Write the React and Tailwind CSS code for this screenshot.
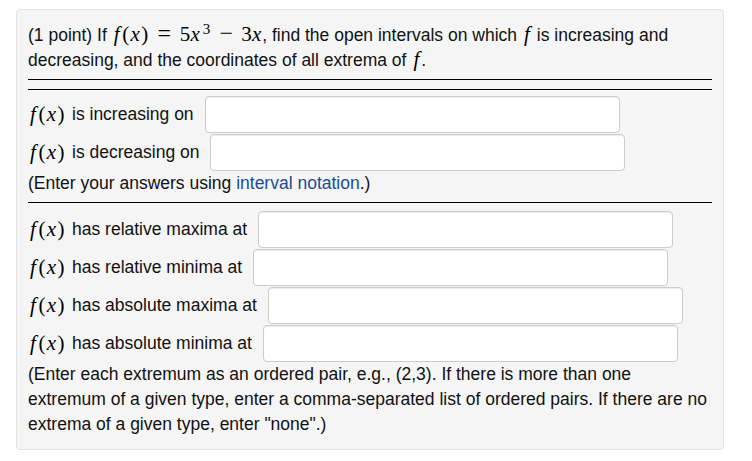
import React from "react";

const mathFont = { fontFamily: '"Liberation Serif", "Times New Roman", serif' };

function G({ w, it, children, cls = "" }) {
  const base = `inline-block text-center ${w} ${cls}`;
  return it ? <i className={base}>{children}</i> : <span className={base}>{children}</span>;
}

function M({ children }) {
  return (
    <span className="whitespace-nowrap text-[21px] leading-[0] text-black" style={mathFont}>
      {children}
    </span>
  );
}

function Fx() {
  return (
    <M>
      <G w="w-[10px]" it>f</G>
      <G w="w-[8px]">(</G>
      <G w="w-[11px]" it>x</G>
      <G w="w-[8px]">)</G>
    </M>
  );
}

function Row({ label }) {
  return (
    <div className="flex h-[38px] items-center">
      <Fx />
      <span className="ml-[7px]">{label}</span>
      <div className="ml-[11px] h-[37px] w-[415px] rounded-[4px] border border-[#cccccc] bg-white shadow-[inset_0_1px_1px_rgba(0,0,0,0.075)]" />
    </div>
  );
}

export default function App() {
  return (
    <div
      className="min-h-[461px] w-[752px] bg-white pl-[16px] pt-[9px] text-[17.5px] text-[#111]"
      style={{ fontFamily: '"Liberation Sans", Arial, sans-serif' }}
    >
      <div className="w-[708px] rounded-[4px] border border-[#e3e3e3] bg-[#f5f5f5] px-[11px] pb-[12px] pt-[13px]">
        <p className="leading-[25px]">
          (1 point) If{" "}
          <M>
            <G w="w-[10px]" it>f</G>
            <G w="w-[8px]">(</G>
            <G w="w-[11px]" it>x</G>
            <G w="w-[8px]">)</G>
            <G w="w-[31px]" cls="text-[24px]">=</G>
            <G w="w-[10px]">5</G>
            <G w="w-[11px]" it>x</G>
            <sup className="ml-[2px] mr-[1px] text-[15px]">3</sup>
            <G w="w-[30px]" cls="text-[24px]">−</G>
            <G w="w-[10px]">3</G>
            <G w="w-[11px]" it>x</G>
          </M>
          , find the open intervals on which{" "}
          <M>
            <G w="w-[10px]" it>f</G>
          </M>{" "}
          is increasing and
          <br />
          decreasing, and the coordinates of all extrema of{" "}
          <M>
            <G w="w-[10px]" it>f</G>
          </M>
          .
        </p>
        <div className="mt-[6px] h-px bg-black" />
        <div className="mt-[9px] h-px bg-black" />
        <div className="mt-[5px]">
          <Row label="is increasing on" />
          <Row label="is decreasing on" />
        </div>
        <p className="leading-[25px]">
          (Enter your answers using <span className="text-[#214b94]">interval notation</span>.)
        </p>
        <div className="mt-[6px] h-px bg-black" />
        <div className="mt-[7px]">
          <Row label="has relative maxima at" />
          <Row label="has relative minima at" />
          <Row label="has absolute maxima at" />
          <Row label="has absolute minima at" />
        </div>
        <p className="leading-[25px]">
          (Enter each extremum as an ordered pair, e.g., (2,3). If there is more than one
          <br />
          extremum of a given type, enter a comma-separated list of ordered pairs. If there are no
          <br />
          extrema of a given type, enter "none".)
        </p>
      </div>
    </div>
  );
}
